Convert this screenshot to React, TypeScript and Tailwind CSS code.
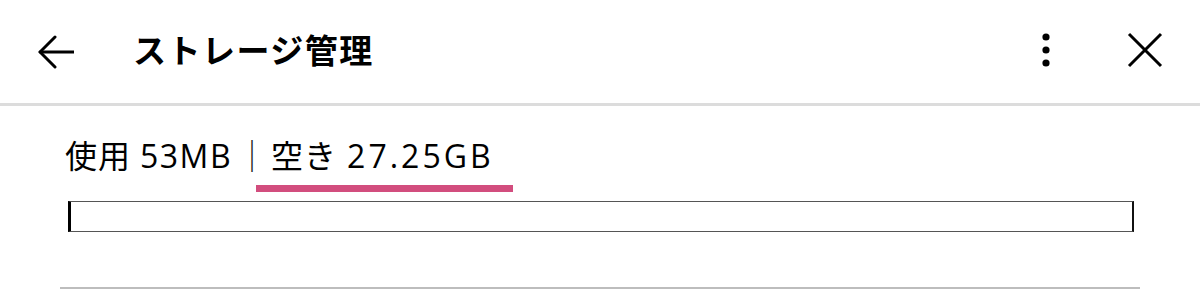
export default function App() {
  return (
    <div
      className="w-[1200px] h-[289px] bg-white text-black overflow-hidden"
      style={{ fontFamily: '"Noto Sans CJK JP", "Noto Sans", sans-serif' }}
    >
      {/* header */}
      <div className="h-[106px] flex items-center border-b-[3px] border-[#dcdcdc] pl-[38px] pr-[37px]">
        <svg width="36" height="34" viewBox="0 0 36 34" fill="none" stroke="black" strokeWidth="3" strokeLinecap="square">
          <path d="M35 17H3" />
          <path d="M17 2L2 17L17 32" strokeLinecap="round" strokeLinejoin="miter" />
        </svg>
        <h1 className="ml-[59px] mb-[4px] text-[33px] font-bold tracking-[1.5px] leading-none">ストレージ管理</h1>
        <div className="flex-1" />
        <svg width="10" height="34" viewBox="0 0 10 34" fill="black" className="mr-[76px] mb-[4px]">
          <circle cx="5" cy="4" r="3.6" />
          <circle cx="5" cy="17" r="3.6" />
          <circle cx="5" cy="30" r="3.6" />
        </svg>
        <svg width="36" height="36" viewBox="0 0 36 36" fill="none" stroke="black" strokeWidth="3" className="mb-[4px]">
          <path d="M2 2L34 34M34 2L2 34" />
        </svg>
      </div>

      {/* storage */}
      <div className="px-[60px]">
        <div className="pl-[5px] pt-[28px] flex items-baseline text-[32px] leading-[40px] whitespace-nowrap">
          <span className="tracking-[1px]">使用</span>
          <span className="ml-[9px] tracking-[1.5px]" style={{ fontFamily: '"Open Sans", sans-serif' }}>53MB</span>
          <span className="ml-[4px] text-[#222]">｜</span>
          <span className="ml-[3px] tracking-[1px]">空き</span>
          <span className="ml-[10px] tracking-[3px]" style={{ fontFamily: '"Open Sans", sans-serif' }}>27.25GB</span>
        </div>
        <div className="ml-[196px] mt-[9px] w-[257px] h-[7px] bg-[#d24d7e]" />
        <div className="ml-[8px] mr-[6px] mt-[9px] h-[31px] border border-[#555] border-l-[3px] border-l-black border-r-2 border-r-[#111]" />
        <div className="mt-[55px] h-[2px] bg-[#bdbdbd]" />
      </div>
    </div>
  );
}
